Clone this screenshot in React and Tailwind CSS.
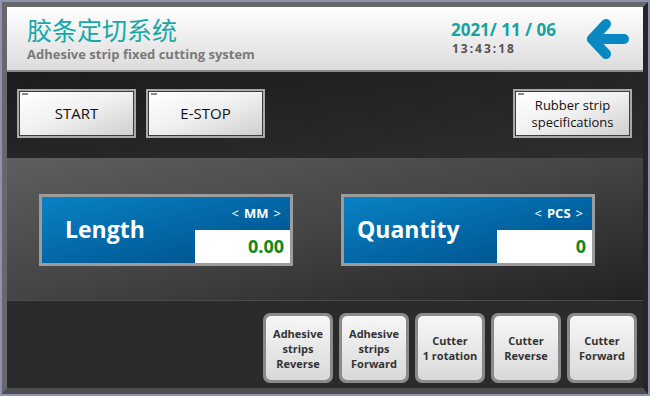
import React from 'react';

const font = { fontFamily: '"Open Sans", "Noto Sans CJK SC", sans-serif' };

function PanelButton({ children, className = '', text = 'text-[15px]' }) {
  return (
    <div className={`border-2 border-[#a9a9a9] bg-[#a9a9a9] ${className}`}>
      <div className={`relative flex h-full items-center justify-center border border-[#3c3c3c] bg-gradient-to-br from-[#ffffff] via-[#f0f0f0] to-[#cfcfcf] text-center leading-[17px] text-[#111] ${text}`}>
        <span className="absolute left-[2px] top-[1px] h-[2px] w-[6px] bg-[#8a8a8a]" />
        {children}
      </div>
    </div>
  );
}

function ValueBox({ label, unit, value, pad }) {
  return (
    <div className="h-[72px] w-[254px] border-[3px] border-[#9c9c9c] bg-[#9c9c9c]">
      <div className="flex h-full bg-gradient-to-br from-[#0a82c4] to-[#004d88]">
        <div className={`flex flex-1 items-center pb-[2px] text-[23px] font-bold text-white ${pad}`}>{label}</div>
        <div className="flex w-[95px] flex-col">
          <div className="flex h-[33px] items-center justify-end gap-[5px] pr-[9px] text-[13px] font-bold text-white">
            <span className="font-normal">&lt;</span>
            <span>{unit}</span>
            <span className="font-normal">&gt;</span>
          </div>
          <div className="flex flex-1 items-center justify-end bg-white pr-[6px] text-[18px] font-bold text-[#128a12]">
            {value}
          </div>
        </div>
      </div>
    </div>
  );
}

function JogButton({ lines }) {
  return (
    <div className="h-[70px] w-[70px] rounded-[7px] bg-[#8a8a8a] p-[3px]">
      <div className="flex h-full flex-col items-center justify-center rounded-[5px] bg-gradient-to-b from-[#f7f7f7] to-[#d9d9d9] text-center text-[11px] font-bold leading-[15px] text-[#333]">
        {lines.map((l) => (
          <span key={l}>{l}</span>
        ))}
      </div>
    </div>
  );
}

export default function App() {
  return (
    <div className="h-[396px] w-[650px] overflow-hidden border-2 border-[#8c92b0] bg-[#2a2a2a]" style={font}>
      <div className="flex h-full flex-col border-b-[6px] border-l-[5px] border-r-[5px] border-t-[5px] border-b-[#4e4e50] border-l-[#68686c] border-r-[#262626] border-t-[#68686c]">
        {/* header */}
        <div className="flex h-[63px] items-center bg-gradient-to-b from-[#ffffff] to-[#dcdcdc]">
          <div className="flex flex-1 flex-col gap-[3px] pl-[20px]">
            <div className="text-[25px] leading-[28px] text-[#14a9a9]">胶条定切系统</div>
            <div className="text-[13px] font-bold leading-[15px] text-[#7a7a7a]">Adhesive strip fixed cutting system</div>
          </div>
          <div className="mr-[30px] flex flex-col pb-[1px]">
            <div className="text-[17px] font-bold leading-[22px] text-[#14a3a3]">2021/ 11 / 06</div>
            <div className="pl-[1px] text-[12px] font-bold leading-[16px] tracking-[2px] text-[#555]">13:43:18</div>
          </div>
          <svg width="44" height="44" viewBox="0 0 44 44" className="mr-[13px]">
            <path
              d="M38 22 H8 M20 7 L6 22 L20 37"
              fill="none"
              stroke="#0a88c2"
              strokeWidth="10"
              strokeLinecap="round"
              strokeLinejoin="round"
            />
          </svg>
        </div>
        <div className="h-[2px] bg-[#8a8a8a]" />

        {/* control row */}
        <div className="flex h-[86px] items-start bg-gradient-to-br from-[#1c1c1c] to-[#2e2e2e] pt-[17px]">
          <PanelButton className="ml-[10px] h-[49px] w-[119px]">START</PanelButton>
          <PanelButton className="ml-[10px] h-[49px] w-[119px]">E-STOP</PanelButton>
          <div className="flex-1" />
          <PanelButton className="mr-[11px] h-[49px] w-[119px]" text="text-[13px]">
            <span>
              Rubber strip
              <br />
              specifications
            </span>
          </PanelButton>
        </div>

        {/* values */}
        <div className="flex h-[142px] items-start gap-[48px] bg-gradient-to-br from-[#5e5e5e] via-[#444] to-[#222] pl-[32px] pt-[36px]">
          <ValueBox label="Length" unit="MM" value="0.00" pad="pl-[23px]" />
          <ValueBox label="Quantity" unit="PCS" value="0" pad="pl-[13px]" />
        </div>

        {/* jog buttons */}
        <div className="flex flex-1 items-start justify-end gap-[6px] border-t border-[#4a4a4a] bg-[#2b2b2b] pr-[6px] pt-[12px]">
          <JogButton lines={['Adhesive', 'strips', 'Reverse']} />
          <JogButton lines={['Adhesive', 'strips', 'Forward']} />
          <JogButton lines={['Cutter', '1 rotation']} />
          <JogButton lines={['Cutter', 'Reverse']} />
          <JogButton lines={['Cutter', 'Forward']} />
        </div>
      </div>
    </div>
  );
}
